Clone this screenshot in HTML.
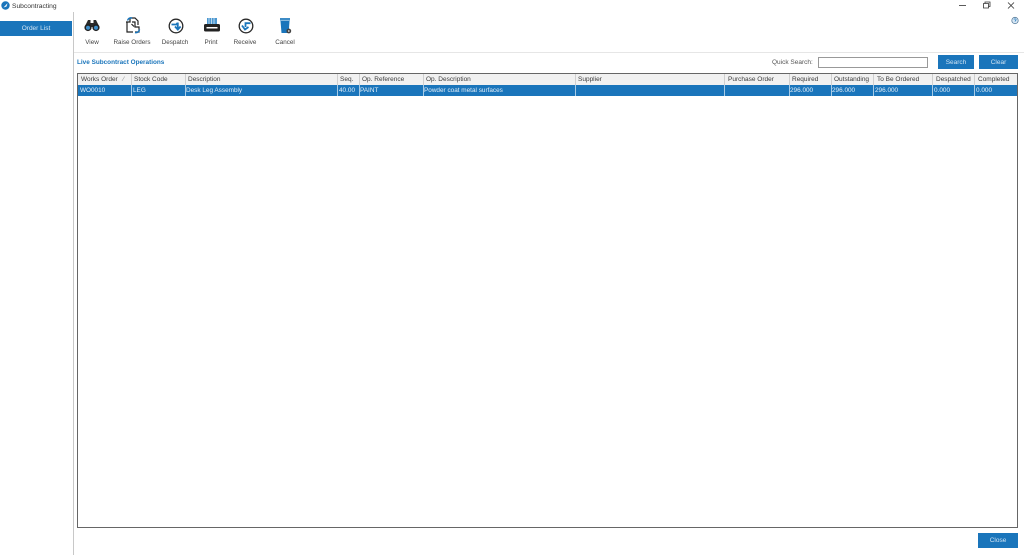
<!DOCTYPE html>
<html>
<head>
<meta charset="utf-8">
<style>
html,body{margin:0;padding:0;background:#fff;}
body{width:1024px;height:555px;position:relative;overflow:hidden;font-family:"Liberation Sans",sans-serif;font-size:6.5px;color:#444;filter:blur(.3px);}
.a{position:absolute;white-space:nowrap;}
.lbl{position:absolute;top:38.5px;text-align:center;color:#444;font-size:6.3px;line-height:8px;}
.btn{position:absolute;background:#1a75bb;color:#cfe3f3;text-align:center;font-size:6.5px;}
.h{position:absolute;top:74px;height:11px;line-height:11px;color:#3c3c3c;font-size:6.5px;white-space:nowrap;}
.c{position:absolute;top:85px;height:11px;line-height:11px;color:#e4eff8;font-size:6.4px;white-space:nowrap;}
.hs{position:absolute;top:74px;width:1px;height:11px;background:#cfcfcf;}
.rs{position:absolute;top:85px;width:1px;height:11px;background:#a8cbe6;}
</style>
</head>
<body>
<svg class="a" style="left:1px;top:1px" width="9" height="9" viewBox="0 0 9 9"><circle cx="4.5" cy="4.5" r="4.2" fill="#1a75bb"/><path d="M2.5 6.5L6.5 2.2L5.5 5.5Z" fill="#fff"/></svg>
<div class="a" style="left:12px;top:3px;font-size:6.7px;line-height:8px;color:#333">Subcontracting</div>

<svg class="a" style="left:955px;top:0" width="64" height="10" viewBox="0 0 64 10" fill="none" stroke="#333" stroke-width=".8"><path d="M4 5.5H11"/><path d="M28.500 3.500H33.500V8H28.500ZM30 3.500V2H35V6.500H33.500"/><path d="M53 2.500L59 8.500M59 2.500L53 8.500"/></svg>
<svg class="a" style="left:1011px;top:16px" width="8" height="9" viewBox="0 0 8 9"><circle cx="4" cy="4.500" r="3.200" fill="#dbe9f5" stroke="#5a7f9e" stroke-width=".8"/><path d="M2.900 3.600C3.200 2.500 5.200 2.600 5.100 3.800C5 4.600 4 4.600 4 5.600" fill="none" stroke="#1a75bb" stroke-width=".7"/></svg>

<div class="a" style="left:0;top:20.500px;width:72px;height:15px;background:#1a75bb;color:#d5e6f4;line-height:15px;text-align:center;font-size:6.500px">Order List</div>
<div class="a" style="left:73px;top:12px;width:1px;height:543px;background:#c8c8c8"></div>
<div class="a" style="left:74px;top:52px;width:950px;height:1px;background:#e6e6e6"></div>

<svg class="a" style="left:84px;top:19px" width="16" height="13" viewBox="0 0 16 13"><path d="M4 1H6.500V4H9.500V1H12L15.500 8H.5Z" fill="#2a2a2a"/><circle cx="4" cy="8.500" r="3.600" fill="#222"/><circle cx="12" cy="8.500" r="3.600" fill="#222"/><circle cx="4" cy="8.700" r="2" fill="#3f8fcb"/><circle cx="12" cy="8.700" r="2" fill="#3f8fcb"/></svg>
<div class="lbl" style="left:72px;width:40px">View</div>

<svg class="a" style="left:125px;top:17px" width="16" height="17" viewBox="0 0 16 17" fill="none"><path d="M5 1H10L13 4V8M8 15H2V5" stroke="#222" stroke-width="1.200"/><path d="M5 1V5H1" stroke="#222" stroke-width="1.200"/><path d="M7 5H10V10H14V15H10" stroke="#222" stroke-width="1.200"/><path d="M6.500 7L9 9.500" stroke="#222" stroke-width="1.200"/><path d="M2.500 3.500C3 1.500 5 .5 7 1" stroke="#1a75bb" stroke-width="1.500"/><path d="M10 15.500C12 16 14 15 14.500 12.500" stroke="#1a75bb" stroke-width="1.500"/></svg>
<div class="lbl" style="left:109px;width:46px">Raise Orders</div>

<svg class="a" style="left:168px;top:18px" width="16" height="16" viewBox="0 0 16 16" fill="none"><circle cx="8" cy="8" r="6.800" stroke="#2a2a2a" stroke-width="1.300" fill="#fff"/><path d="M3.500 6.500H9V4.800" stroke="#1a75bb" stroke-width="1.800"/><path d="M9.800 4.500V10.200M7 8.500L9.800 11.500L12.600 8.500" stroke="#1a75bb" stroke-width="1.800"/></svg>
<div class="lbl" style="left:155px;width:40px">Despatch</div>

<svg class="a" style="left:204px;top:18px" width="16" height="15" viewBox="0 0 16 15"><rect x="3" y="0" width="10" height="6" fill="#4b97d0"/><path d="M5 0V6M7.500 0V6M10 0V6" stroke="#fff" stroke-width=".6"/><rect x="0" y="6" width="16" height="7.500" rx="1.500" fill="#222"/><rect x="2.500" y="9" width="11" height="1.500" fill="#fff"/></svg>
<div class="lbl" style="left:192px;width:38px">Print</div>

<svg class="a" style="left:238px;top:18px" width="16" height="16" viewBox="0 0 16 16" fill="none"><circle cx="8" cy="8" r="6.800" stroke="#2a2a2a" stroke-width="1.300" fill="#fff"/><path d="M12.500 5.200H7.500V9" stroke="#1a75bb" stroke-width="1.800"/><path d="M4 7.500L7 11.500L10.500 9" stroke="#1a75bb" stroke-width="1.800"/></svg>
<div class="lbl" style="left:226px;width:38px">Receive</div>

<svg class="a" style="left:279px;top:18px" width="13" height="17" viewBox="0 0 13 17"><rect x="1" y="0" width="10" height="2.600" fill="#3d8cc6"/><path d="M1.500 3H10.500L9.700 15H2.500Z" fill="#1a75bb"/><circle cx="9.800" cy="13" r="2.400" fill="#444"/><circle cx="9.800" cy="13" r=".8" fill="#fff"/></svg>
<div class="lbl" style="left:265px;width:40px">Cancel</div>

<div class="a" style="left:77px;top:59px;color:#1a75bb;font-weight:bold;font-size:6.400px;line-height:8px">Live Subcontract Operations</div>
<div class="a" style="left:772px;top:58.500px;font-size:6.500px;line-height:8px;color:#555">Quick Search:</div>
<div class="a" style="left:818px;top:57px;width:108px;height:9px;border:1px solid #999;background:#fff"></div>
<div class="btn" style="left:938px;top:55px;width:36px;height:14px;line-height:15px">Search</div>
<div class="btn" style="left:979px;top:55px;width:39px;height:14px;line-height:15px">Clear</div>

<div class="a" style="left:77px;top:73px;width:939px;height:453px;border:1px solid #666;background:#fff"></div>
<div class="a" style="left:78px;top:74px;width:939px;height:11px;background:#f1f1f1"></div>
<div class="a" style="left:78px;top:85px;width:939px;height:11px;background:#1a75bb"></div>

<div class="h" style="left:81px">Works Order</div>
<div class="h" style="left:123px;color:#888">&#x2215;</div>
<div class="h" style="left:134px">Stock Code</div>
<div class="h" style="left:188px">Description</div>
<div class="h" style="left:340px">Seq.</div>
<div class="h" style="left:362px">Op. Reference</div>
<div class="h" style="left:426px">Op. Description</div>
<div class="h" style="left:578px">Supplier</div>
<div class="h" style="left:728px">Purchase Order</div>
<div class="h" style="left:792px">Required</div>
<div class="h" style="left:834px">Outstanding</div>
<div class="h" style="left:877px">To Be Ordered</div>
<div class="h" style="left:936px">Despatched</div>
<div class="h" style="left:978px">Completed</div>

<div class="hs" style="left:131px"></div><div class="hs" style="left:185px"></div><div class="hs" style="left:337px"></div><div class="hs" style="left:359px"></div><div class="hs" style="left:423px"></div><div class="hs" style="left:575px"></div><div class="hs" style="left:724px"></div><div class="hs" style="left:789px"></div><div class="hs" style="left:831px"></div><div class="hs" style="left:873px"></div><div class="hs" style="left:932px"></div><div class="hs" style="left:974px"></div>
<div class="rs" style="left:131px"></div><div class="rs" style="left:185px"></div><div class="rs" style="left:337px"></div><div class="rs" style="left:359px"></div><div class="rs" style="left:423px"></div><div class="rs" style="left:575px"></div><div class="rs" style="left:724px"></div><div class="rs" style="left:789px"></div><div class="rs" style="left:831px"></div><div class="rs" style="left:873px"></div><div class="rs" style="left:932px"></div><div class="rs" style="left:974px"></div>

<div class="c" style="left:80px">WO0010</div>
<div class="c" style="left:133px">LEG</div>
<div class="c" style="left:186px">Desk Leg Assembly</div>
<div class="c" style="left:339px">40.00</div>
<div class="c" style="left:360px">PAINT</div>
<div class="c" style="left:424px">Powder coat metal surfaces</div>
<div class="c" style="left:790px">296.000</div>
<div class="c" style="left:832px">296.000</div>
<div class="c" style="left:875px">296.000</div>
<div class="c" style="left:934px">0.000</div>
<div class="c" style="left:976px">0.000</div>

<div class="btn" style="left:978px;top:533px;width:40px;height:15px;line-height:15px">Close</div>
</body>
</html>
